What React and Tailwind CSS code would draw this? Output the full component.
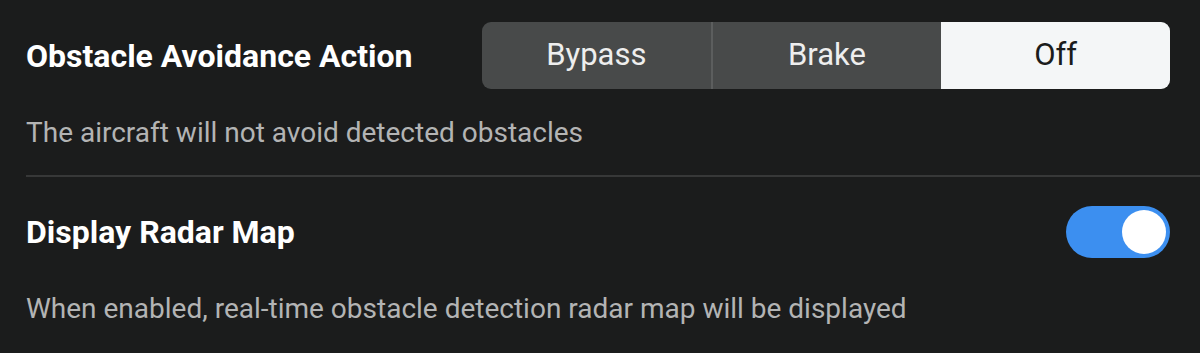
import React from "react";

const options = ["Bypass", "Brake", "Off"];

const Segmented = ({ value }) => (
  <div className="flex h-[67px] w-[688px] overflow-hidden rounded-[9px] bg-[#484a4a]">
    {options.map((opt, i) => {
      const active = opt === value;
      return (
        <div
          key={opt}
          className={
            "flex flex-1 items-center justify-center text-[31px] " +
            (active ? "bg-[#f4f6f7] text-[#1b1c1c]" : "text-[#eeeeee]") +
            (i > 0 && !active ? " border-l-2 border-[#5c5e5e]" : "")
          }
        >
          {opt}
        </div>
      );
    })}
  </div>
);

const Toggle = () => (
  <div className="flex h-[52px] w-[104px] items-center justify-end rounded-full bg-[#3c8ff0] px-[4px]">
    <div className="h-[44px] w-[44px] rounded-full bg-white" />
  </div>
);

export default function App() {
  return (
    <div
      className="h-[353px] w-[1200px] overflow-hidden bg-[#1b1c1c]"
      style={{ fontFamily: "Roboto, 'Noto Sans', sans-serif" }}
    >
      <div className="pl-[26px]">
        <div className="pr-[30px] pt-[22px]">
          <div className="flex items-center justify-between">
            <div className="text-[32px] font-bold leading-[40px] text-white">Obstacle Avoidance Action</div>
            <Segmented value="Off" />
          </div>
          <div className="mt-[28px] text-[28px] leading-[32px] text-[#b3b4b4]">
            The aircraft will not avoid detected obstacles
          </div>
        </div>
        <div className="mt-[26px] h-[2px] bg-[#373838]" />
        <div className="pr-[30px]">
          <div className="mt-[29px] flex items-center justify-between">
            <div className="text-[32px] font-bold leading-[40px] text-white">Display Radar Map</div>
            <Toggle />
          </div>
          <div className="mt-[35px] text-[28px] leading-[32px] text-[#b3b4b4]">
            When enabled, real-time obstacle detection radar map will be displayed
          </div>
        </div>
      </div>
    </div>
  );
}
